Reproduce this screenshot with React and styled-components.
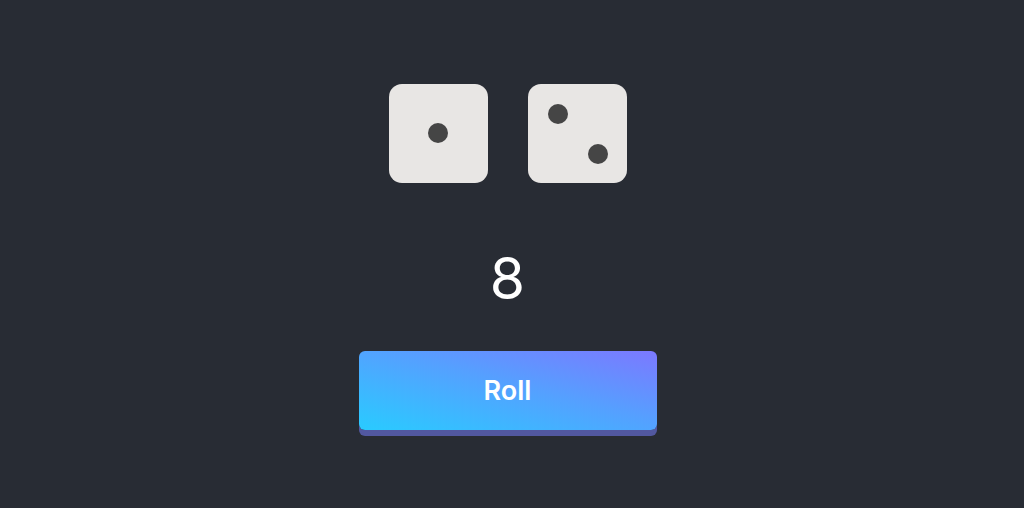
import React from "react";
import styled, { createGlobalStyle } from "styled-components";

const Global = createGlobalStyle`
  html, body { margin: 0; padding: 0; background: #282c34; }
  body { font-family: Inter, "Noto Sans", sans-serif; }
`;

const Page = styled.main`
  min-height: 508px;
  display: flex;
  flex-direction: column;
  align-items: center;
  padding-top: 84px;
  padding-right: 9px;
  box-sizing: border-box;
`;

const DiceRow = styled.div`
  display: flex;
  gap: 40px;
`;

const Die = styled.div`
  width: 99px;
  height: 99px;
  border-radius: 13px;
  background: #e8e6e4;
  position: relative;
`;

const Pip = styled.span`
  position: absolute;
  width: 20px;
  height: 20px;
  border-radius: 50%;
  background: #454545;
  left: ${(p) => p.$x - 10}px;
  top: ${(p) => p.$y - 10}px;
`;

const Total = styled.div`
  margin-top: 62px;
  color: #ffffff;
  font-family: Inter, sans-serif;
  font-weight: 400;
  font-size: 57px;
  line-height: 68px;
`;

const RollButton = styled.button`
  margin-top: 38px;
  width: 298px;
  height: 79px;
  border: none;
  border-radius: 6px;
  background: linear-gradient(to top right, #29cbff 0%, #55a0ff 55%, #7c78ff 100%);
  box-shadow: 0 6px 0 #5258a0;
  color: #ffffff;
  font-family: Inter, sans-serif;
  font-weight: 600;
  font-size: 27px;
  cursor: pointer;
  padding: 0;
`;

const faces = {
  1: [[49, 49]],
  2: [[30, 30], [70, 70]],
};

export default function App() {
  return (
    <>
      <Global />
      <Page>
        <DiceRow>
          {[1, 2].map((v, i) => (
            <Die key={i}>
              {faces[v].map(([x, y], j) => (
                <Pip key={j} $x={x} $y={y} />
              ))}
            </Die>
          ))}
        </DiceRow>
        <Total>8</Total>
        <RollButton>Roll</RollButton>
      </Page>
    </>
  );
}
